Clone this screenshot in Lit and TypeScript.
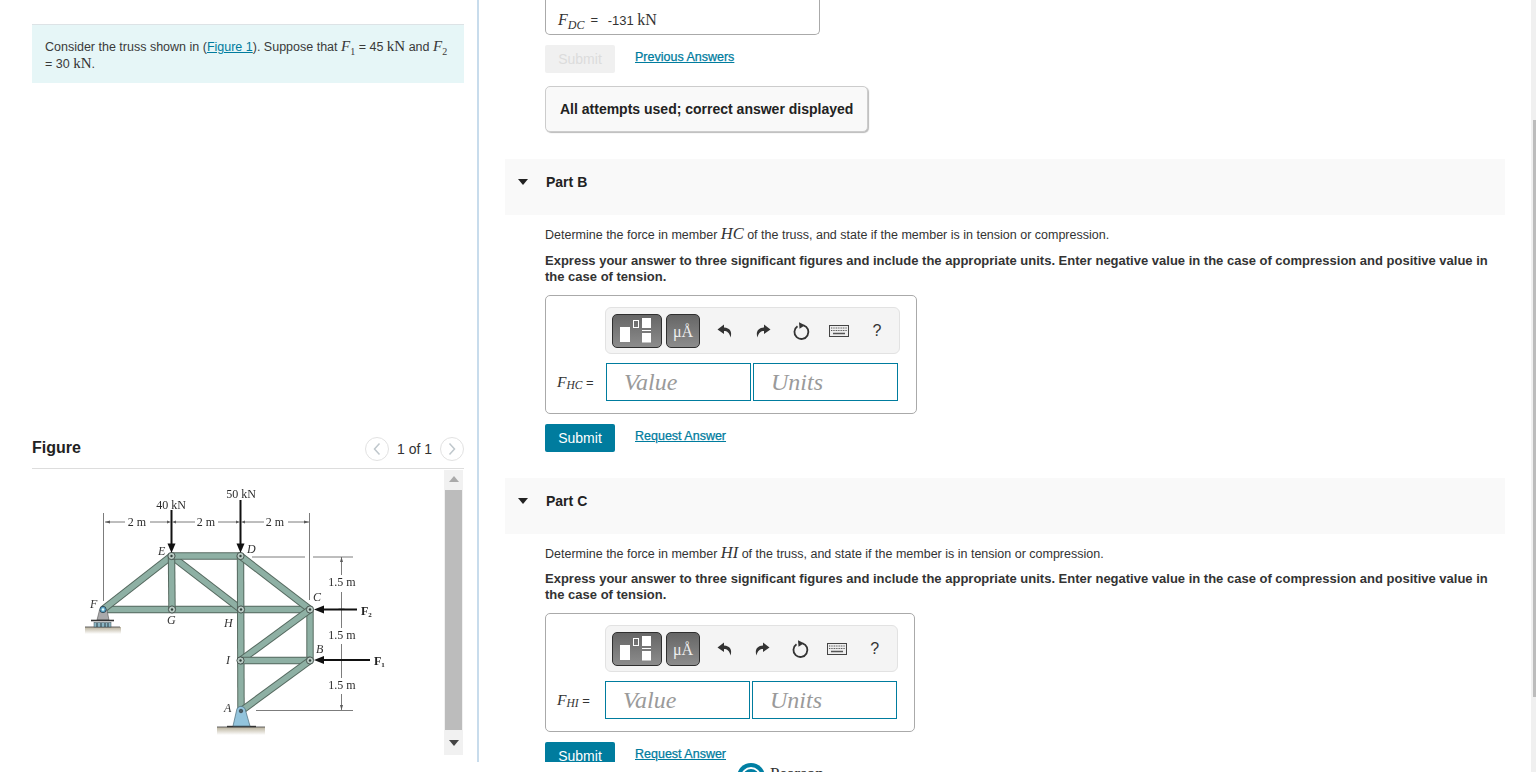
import { LitElement, html, css, svg } from "lit";
import { customElement } from "lit/decorators.js";

const member = (pts: number[][]) => {
  const d = pts.map((p, i) => `${i ? "L" : "M"}${p[0]} ${p[1]}`).join(" ");
  return svg`<path d=${d} fill="none" stroke="#55695f" stroke-width="7.4"/><path d=${d} fill="none" stroke="#8eb0a4" stroke-width="5.4"/>`;
};
const pin = (x: number, y: number) => svg`<circle cx=${x} cy=${y} r="3.6" fill="#b9cbc4" stroke="#3d4a45" stroke-width="0.9"/><circle cx=${x} cy=${y} r="1.2" fill="#34403c"/>`;
const lbl = (x: number, y: number, t: string) => svg`<text class="it" x=${x} y=${y}>${t}</text>`;
const num = (x: number, y: number, t: string) => svg`<text class="tx" x=${x} y=${y} text-anchor="middle">${t}</text>`;

const E = [171.5, 556], D = [240.5, 556], F = [103, 609.5], G = [172, 609.5], H = [241, 609.5], C = [310, 609.5], I = [240.5, 660.5], B = [310, 660.5], A = [241, 711];

const truss = html`<svg class="truss" viewBox="32 470 412 292" width="412" height="292">
  <defs>
    <linearGradient id="gr" x1="0" x2="0" y1="0" y2="1"><stop offset="0" stop-color="#b8b09a"/><stop offset="1" stop-color="#ffffff"/></linearGradient>
  </defs>
  <g fill="none" stroke="#5a5a5a" stroke-width="0.8">
    <path d="M103.5 513V601M309.5 513V600M105 522H125M150 522H168M175 522H195M218 522H237M244 522H264M288 522H309"/>
    <path d="M252 557H305M313 557H353M256 710.5H353M341.5 557V575M341.5 592V628M341.5 644V678M341.5 694V710"/>
    <path d="M338.5 609H344.5M338.5 660H344.5"/>
  </g>
  <g fill="#5a5a5a">
    <path d="M105 522l5-1.6v3.2zM171 522l-4-1.6v3.2zM172 522l4-1.6v3.2zM240 522l-4-1.6v3.2zM241 522l4-1.6v3.2zM309 522l-5-1.6v3.2z"/>
    <path d="M341.5 557l-1.5 5h3zM341.5 710l-1.5-5h3z"/>
  </g>
  ${member([F, C])}
  ${member([F, E])}${member([E, H])}${member([E, G])}${member([E, D])}
  ${member([D, A])}${member([D, C])}${member([C, B])}${member([C, I])}${member([I, B])}${member([B, A])}
  <rect x="85" y="627" width="36" height="7" fill="url(#gr)"/>
  <path d="M85 627H120" stroke="#555" stroke-width="0.9"/>
  <path d="M97 620L99.500 610H107L109 620Z" fill="#a9a9ab" stroke="#555" stroke-width="0.6"/>
  <path d="M91 620.500H114" stroke="#333" stroke-width="1.6"/>
  <rect x="94" y="622.500" width="17" height="4.500" fill="#8bb6c4" stroke="#3b4a50" stroke-width="0.5"/>
  <path d="M97 623v4M101 623v4M105 623v4M108 623v4" stroke="#2c3a40" stroke-width="1"/>
  <circle cx="103" cy="609.500" r="3.200" fill="#5aa2c4" stroke="#2f4550" stroke-width="0.9"/>
  <circle cx="103" cy="609.500" r="1.200" fill="#dff"/>
  ${[E, D, G, H, C, I, B].map((p) => pin(p[0], p[1]))}
  <rect x="217" y="727" width="48" height="8" fill="url(#gr)"/>
  <path d="M217 727H265" stroke="#555" stroke-width="0.9"/>
  <path d="M227 726.500H256" stroke="#333" stroke-width="1.400"/>
  <path d="M233 726L237 708.500Q241 704 245 708.500L250 726Z" fill="#93c4dc" stroke="#4a6a78" stroke-width="0.7"/>
  <circle cx="241" cy="711" r="1.800" fill="#4c5e66" stroke="#222" stroke-width="0.5"/>
  <g stroke="#111" stroke-width="2" fill="#111">
    <path d="M171.500 510V546" fill="none"/><path d="M171.500 553l-4-9.500h8z" stroke="none"/>
    <path d="M240.500 500V546" fill="none"/><path d="M240.500 553l-4-9.500h8z" stroke="none"/>
    <path d="M323 609.500H357" fill="none"/><path d="M314 609.500l10-4v8z" stroke="none"/>
    <path d="M323 660H370" fill="none"/><path d="M314 660l10-4v8z" stroke="none"/>
  </g>
  ${num(171, 509, "40 kN")}${num(241, 498, "50 kN")}
  ${num(137, 526, "2 m")}${num(206, 526, "2 m")}${num(275, 526, "2 m")}
  ${num(342, 586, "1.5 m")}${num(342, 639, "1.5 m")}${num(342, 689, "1.5 m")}
  ${lbl(158, 555, "E")}${lbl(247, 553, "D")}${lbl(90, 608, "F")}${lbl(167, 624, "G")}${lbl(224, 627, "H")}
  ${lbl(313, 601, "C")}${lbl(316, 653, "B")}${lbl(226, 664, "I")}${lbl(224, 712, "A")}
  <text class="bd" x="361" y="615">F<tspan class="sb" dy="2">2</tspan></text>
  <text class="bd" x="374" y="665">F<tspan class="sb" dy="2">1</tspan></text>
</svg>`;

const toolbar = html`<div class="toolbar">
  <div class="tbtn tpl">
    <svg width="48" height="32" viewBox="0 0 48 32">
      <rect x="7" y="12" width="10" height="15" fill="#fff"/>
      <rect x="20.500" y="5.500" width="5" height="7" fill="none" stroke="#fff"/>
      <rect x="29" y="3" width="9" height="10" fill="#fff"/><rect x="29" y="15" width="9" height="1" fill="#fff"/><rect x="29" y="18" width="9" height="9.500" fill="#fff"/>
    </svg>
  </div>
  <div class="tbtn unit"><span>μÅ</span></div>
  <div class="ico">
    <svg width="20" height="20" viewBox="0 0 20 20"><path d="M9 3.500L2.500 8.500L9 13V10C12 10 14.500 11.500 15.500 16.500C17.500 11 15 6.800 9 6.500Z" fill="#333"/></svg>
  </div>
  <div class="ico">
    <svg width="20" height="20" viewBox="0 0 20 20"><path d="M11 3.500L17.500 8.500L11 13V10C8 10 5.500 11.500 4.500 16.500C2.500 11 5 6.800 11 6.500Z" fill="#333"/></svg>
  </div>
  <div class="ico">
    <svg width="20" height="20" viewBox="0 0 20 20"><path d="M6.500 5.200A7 7 0 1 0 12.500 4.300" fill="none" stroke="#333" stroke-width="1.800"/><path d="M8 1.200L14 4.200L8.500 7.800Z" fill="#333"/></svg>
  </div>
  <div class="ico">
    <svg width="20" height="12" viewBox="0 0 20 12"><rect x="0.500" y="0.500" width="19" height="11" fill="#eee" stroke="#444"/><path d="M2 3H18M2 5.500H18" stroke="#555" stroke-dasharray="1 0.700"/><path d="M4 8.500H16" stroke="#555" stroke-width="1.500"/></svg>
  </div>
  <div class="ico q">?</div>
</div>`;

const part = (
  name: string,
  cls: string,
  member: string,
  sub: string
) => html`
  <section class="part ${cls}">
    <header class="phead"><span class="tri"></span><span class="pname">Part ${name}</span></header>
    <div class="pbody">
      <p class="q1">Determine the force in member <i class="mi">${member}</i> of the truss, and state if the member is in tension or compression.</p>
      <p class="q2">Express your answer to three significant figures and include the appropriate units. Enter negative value in the case of compression and positive value in the case of tension.</p>
      <div class="answer">
        ${toolbar}
        <div class="row">
          <span class="alab"><i class="mF">F<sub>${sub}</sub></i> <span class="eq">=</span></span>
          <div class="inp">Value</div>
          <div class="inp">Units</div>
        </div>
      </div>
      <div class="actions"><button class="sub">Submit</button><a class="lnk">Request Answer</a></div>
    </div>
  </section>`;

@customElement("app-root")
export class AppRoot extends LitElement {
  static styles = css`
    :host { display: block; width: 1536px; height: 772px; overflow: hidden; position: relative; background: #fff; font-family: "Liberation Sans", Arial, sans-serif; color: #333; font-size: 13px; }
    .main { display: grid; grid-template-columns: 479px 1fr; height: 762px; overflow: hidden; }
    .left { border-right: 2px solid #c8dcec; padding: 24px 13px 0 32px; box-sizing: border-box; height: 762px; display: flex; flex-direction: column; }
    .intro { background: #e6f6f7; border-top: 1px solid #dde3e6; height: 59px; box-sizing: border-box; padding: 13px 13px 0; line-height: 16px; font-size: 12.500px; color: #3a3a3a; }
    .intro a { color: #007c9e; text-decoration: underline; }
    .intro .v { font-family: "Liberation Serif", serif; font-size: 15px; color: #333; }
    .intro .vi { font-family: "Liberation Serif", serif; font-style: italic; font-size: 15px; }
    .intro sub { font-size: 10px; line-height: 0; font-style: normal; }
    .fighead { margin-top: 349px; height: 37px; border-bottom: 1px solid #ddd; display: flex; align-items: center; margin-right: 0; box-sizing: border-box; padding-bottom: 2px; }
    .fighead .t { font-weight: bold; font-size: 16px; color: #222; flex: 1; margin-top: -3px; }
    .pager { display: flex; align-items: center; gap: 8px; font-size: 14px; color: #333; }
    .circ { width: 24px; height: 24px; border: 1px solid #e2e2e2; border-radius: 50%; box-sizing: border-box; display: flex; align-items: center; justify-content: center; }
    .figrow { display: flex; margin-top: 1px; }
    .truss { display: block; filter: blur(0.35px); }
    .truss .tx { font: 12px "Liberation Serif", serif; fill: #2c2c2c; }
    .truss .it { font: italic 12px "Liberation Serif", serif; fill: #333; }
    .truss .bd { font: bold 12px "Liberation Serif", serif; fill: #222; }
    .truss .sb { font-size: 7px; }
    .vbar { width: 19px; height: 285px; background: #f1f1f1; display: flex; flex-direction: column; align-items: center; }
    .vbar .up { width: 0; height: 0; border: 5px solid transparent; border-top: 0; border-bottom: 6px solid #aaa; margin: 6px 0 8px; }
    .vbar .th { width: 17px; height: 240px; background: #bcbcbc; }
    .vbar .dn { width: 0; height: 0; border: 5px solid transparent; border-bottom: 0; border-top: 6px solid #444; margin-top: 10px; }

    .right { padding: 0 31px 0 26px; }
    .inner { margin-left: 40px; }
    .done { width: 275px; height: 35px; box-sizing: border-box; border: 1px solid #aaa; border-top: none; border-radius: 0 0 5px 5px; padding: 5px 12px 0; display: flex; align-items: center; gap: 6px; }
    .done .mF { font-family: "Liberation Serif", serif; font-style: italic; font-size: 16px; }
    .done .kn { font-family: "Liberation Serif", serif; font-size: 16px; }
    .done sub { font-size: 12px; line-height: 0; }
    .actions { display: flex; align-items: flex-start; }
    .sub { width: 70px; height: 28px; border: none; border-radius: 2px; background: #007c9e; color: #fff; font: 14px "Liberation Sans", Arial, sans-serif; padding: 0; flex: none; }
    .sub.off { background: #f0f0f0; color: #dcdcdc; }
    .lnk { margin-left: 20px; font-size: 12.500px; font-weight: normal; color: #007c9e; text-decoration: underline; -webkit-text-stroke: 0.25px #007c9e; margin-top: 5px; }
    .alert { margin-top: 13px; width: 323px; height: 46px; box-sizing: border-box; border: 1px solid #ccc; border-radius: 5px; background: #f9f9f9; box-shadow: 1px 1px 1px #bbb; display: flex; align-items: center; padding-left: 14px; font-weight: bold; font-size: 14px; color: #222; white-space: nowrap; }
    .part { margin-top: 27px; }
    .part.c { margin-top: 26px; }
    .phead { height: 56px; background: #f9f9f9; display: flex; align-items: center; gap: 18px; padding: 0 0 11px 13px; box-sizing: border-box; width: 1000px; }
    .tri { width: 0; height: 0; border: 5.500px solid transparent; border-bottom: 0; border-top: 6px solid #222; }
    .pname { font-weight: bold; font-size: 14px; color: #222; }
    .pbody { padding-left: 40px; width: 960px; }
    p { margin: 0; }
    .q1 { margin-top: 10px; line-height: 17px; font-size: 12.500px; color: #333; }
    .c .q1 { margin-top: 10px; }
    .mi { font-family: "Liberation Serif", serif; font-size: 16.500px; }
    .q2 { margin-top: 9px; line-height: 16px; font-weight: bold; font-size: 13px; color: #333; width: 960px; }
    .c .q2 { margin-top: 8px; }
    .answer { margin-top: 10px; width: 372px; height: 119px; box-sizing: border-box; border: 1px solid #aaa; border-radius: 5px; padding: 11px 0 0 59px; margin-bottom: 10px; }
    .c .answer { width: 370px; }
    .toolbar { width: 295px; height: 47px; box-sizing: border-box; background: #f4f4f4; border: 1px solid #e2e2e2; border-radius: 6px; display: flex; align-items: center; padding-left: 6px; }
    .c .toolbar { width: 293px; }
    .tbtn { height: 34px; box-sizing: border-box; border: 1px solid #2f2f2f; border-radius: 5px; background: linear-gradient(#666, #8c8c8c); display: flex; align-items: center; justify-content: center; }
    .tpl { width: 50px; margin-right: 4px; }
    .unit { width: 34px; color: #eee; font: 16px "Liberation Serif", serif; }
    .unit span { margin-top: 2px; }
    .ico { width: 38px; display: flex; justify-content: center; align-items: center; flex: none; }
    .ico:nth-child(3) { margin-left: 6px; }
    .c .ico { width: 37.500px; }
    .q { font: 16px "Liberation Sans", Arial, sans-serif; color: #333; }
    .row { display: flex; align-items: center; margin-top: 9px; margin-left: -48px; gap: 2px; }
    .c .row { margin-left: -48px; }
    .alab { width: 47px; font-size: 13px; white-space: nowrap; }
    .c .alab { width: 46px; }
    .alab .mF { font-family: "Liberation Serif", serif; font-size: 15.500px; }
    .alab sub { font-size: 11.500px; line-height: 0; vertical-align: -2px; }
    .inp { width: 145px; height: 38px; box-sizing: border-box; border: 1px solid #007c9e; font: italic 24px "Liberation Serif", serif; color: #9a9a9a; padding-left: 17px; display: flex; align-items: center; }
    .footer { height: 10px; overflow: hidden; display: flex; padding-left: 737px; gap: 5px; }
    .logo { width: 28px; height: 28px; border-radius: 50%; background: #007fa3; position: relative; margin-top: 1px; flex: none; }
    .logo::after { content: ""; position: absolute; inset: 4px; border: 2px solid #fff; border-radius: 50%; }
    .ptext { font: 17px "Liberation Serif", serif; color: #333; line-height: 20px; margin-top: 2px; }
    .sbar { position: absolute; top: 0; right: 0; width: 5px; height: 772px; background: #f0f0f0; }
    .sbar div { position: absolute; top: 120px; right: 0; width: 3px; height: 577px; background: #bcbcbc; }
  `;

  render() {
    return html`
      <div class="main">
        <aside class="left">
          <div class="intro">Consider the truss shown in (<a>Figure 1</a>). Suppose that <span class="vi">F<sub>1</sub></span> = 45 <span class="v">kN</span> and <span class="vi">F<sub>2</sub></span> = 30 <span class="v">kN</span>.</div>
          <div class="fighead">
            <span class="t">Figure</span>
            <div class="pager">
              <span class="circ"><svg width="10" height="14" viewBox="0 0 10 14"><path d="M7.500 1.500L2.500 7L7.500 12.500" fill="none" stroke="#bfc7cc" stroke-width="1.500"/></svg></span>
              <span>1 of 1</span>
              <span class="circ"><svg width="10" height="14" viewBox="0 0 10 14"><path d="M2.500 1.500L7.500 7L2.500 12.500" fill="none" stroke="#bfc7cc" stroke-width="1.500"/></svg></span>
            </div>
          </div>
          <div class="figrow">
            ${truss}
            <div class="vbar"><div class="up"></div><div class="th"></div><div class="dn"></div></div>
          </div>
        </aside>
        <div class="right">
          <div class="inner">
            <div class="done"><i class="mF">F<sub>DC</sub></i> = <span>&nbsp;-131 <span class="kn">kN</span></span></div>
            <div class="actions" style="margin-top:10px"><button class="sub off">Submit</button><a class="lnk">Previous Answers</a></div>
            <div class="alert">All attempts used; correct answer displayed</div>
          </div>
          ${part("B", "b", "HC", "HC")}
          ${part("C", "c", "HI", "HI")}
        </div>
      </div>
      <div class="footer"><div class="logo"></div><span class="ptext">Pearson</span></div>
      <div class="sbar"><div></div></div>
    `;
  }
}
